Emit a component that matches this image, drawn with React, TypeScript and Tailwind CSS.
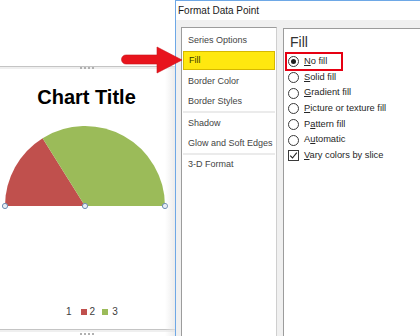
import React from "react";

const font = { fontFamily: '"Liberation Sans", Arial, sans-serif' };

function Radio({ checked }: { checked?: boolean }) {
  return (
    <span className="w-[11px] h-[11px] rounded-full border border-[#3a3a3a] bg-white flex items-center justify-center shrink-0">
      {checked && <span className="w-[5px] h-[5px] rounded-full bg-[#1e1e1e]" />}
    </span>
  );
}

function Row({ children, checked, box }: { children: React.ReactNode; checked?: boolean; box?: boolean }) {
  return (
    <div className="h-[15.7px] flex items-center pl-[4px] gap-[5px] text-[9.3px] text-[#262626]">
      {box ? (
        <span className="w-[11px] h-[11px] border border-[#3a3a3a] bg-white flex items-center justify-center shrink-0">
          <svg width="9" height="9" viewBox="0 0 9 9">
            <path d="M1.2 4.6 L3.5 7 L7.8 1.6" fill="none" stroke="#222" strokeWidth="1.1" />
          </svg>
        </span>
      ) : (
        <Radio checked={checked} />
      )}
      <span>{children}</span>
    </div>
  );
}

function Dots() {
  return (
    <div className="absolute left-[80px] top-[1px] flex gap-[2px]">
      <span className="w-[2px] h-[2px] bg-[#b0b0b0]" />
      <span className="w-[2px] h-[2px] bg-[#b0b0b0]" />
      <span className="w-[2px] h-[2px] bg-[#b0b0b0]" />
      <span className="w-[2px] h-[2px] bg-[#b0b0b0]" />
    </div>
  );
}

export default function App() {
  return (
    <div className="w-[420px] h-[336px] relative overflow-hidden flex bg-white" style={font}>
      {/* Left: chart */}
      <div className="w-[175px] h-full flex flex-col relative shrink-0">
        <div className="h-[66px] bg-white" />
        <div className="h-[1px] bg-[#c4c4c4] relative">
          <Dots />
        </div>
        <div className="h-[2px] bg-[#efefef]" />
        <div className="mt-[16px] h-[24px] leading-[24px] text-[20px] font-bold text-black text-center pr-[2px]">
          Chart Title
        </div>
        <svg width="175" height="103" viewBox="0 0 175 103" className="block">
          <path d="M85 97 L5 97 A80 80 0 0 1 42.6 29.2 Z" fill="#c0504d" />
          <path d="M85 97 L42.6 29.2 A80 80 0 0 1 165 97 Z" fill="#9bbb59" />
          <circle cx="5" cy="97" r="2.6" fill="#e9eef5" stroke="#6f8fb3" strokeWidth="1" />
          <circle cx="85" cy="97" r="2.6" fill="#e9eef5" stroke="#6f8fb3" strokeWidth="1" />
          <circle cx="165" cy="97" r="2.6" fill="#e9eef5" stroke="#6f8fb3" strokeWidth="1" />
        </svg>
        <div className="flex-1" />
        <div className="flex items-center h-[12px] pl-[66px] text-[10px] text-[#404040] leading-none">
          <span>1</span>
          <span className="ml-[9px] w-[6px] h-[6px] bg-[#c0504d]" />
          <span className="ml-[3px]">2</span>
          <span className="ml-[7px] w-[6px] h-[6px] bg-[#9bbb59]" />
          <span className="ml-[4px]">3</span>
        </div>
        <div className="h-[11px]" />
        <div className="h-[1px] bg-[#c4c4c4]" />
        <div className="h-[2px] bg-[#efefef]" />
        <div className="h-[4px] relative">
          <Dots />
        </div>
        <div className="absolute right-0 top-[66px] bottom-0 w-[10px] bg-gradient-to-r from-transparent to-[#e4e4e4] opacity-70" />
      </div>

      {/* Dialog */}
      <div className="flex-1 h-full flex flex-col border-l border-t border-[#6ea8e6]">
        <div className="h-[19px] bg-white flex items-center pl-[2px] text-[10px] text-[#1a1a1a]">
          Format Data Point
        </div>
        <div className="flex-1 bg-[#f0f0f0] flex pl-[5px] pt-[7px]">
          {/* Left list */}
          <div className="w-[96px] bg-white border-l border-t border-[#9c9c9c] border-r border-r-[#cfcfcf] flex flex-col text-[9px] text-[#444]">
            <div className="h-[23px] pt-[2px] flex items-center pl-[6px]">Series Options</div>
            <div className="mx-[1px] h-[19px] flex items-center pl-[5px] bg-[#ffe80f] border border-[#d6b800] text-[#3a3a00]">
              Fill
            </div>
            <div className="mt-[2px] h-[20px] flex items-center pl-[6px]">Border Color</div>
            <div className="h-[19px] flex items-center pl-[6px]">Border Styles</div>
            <div className="mx-[1px] h-[2px] bg-[#ebebeb]" />
            <div className="h-[21px] flex items-center pl-[6px]">Shadow</div>
            <div className="h-[19px] flex items-center pl-[6px]">Glow and Soft Edges</div>
            <div className="mx-[1px] h-[2px] bg-[#ebebeb]" />
            <div className="h-[19px] flex items-center pl-[6px]">3-D Format</div>
          </div>
          {/* Right panel */}
          <div className="flex-1 ml-[6px] mt-[1px] bg-white border-l border-t border-[#9c9c9c] flex flex-col pt-[1px]">
            <div className="h-[24px] leading-[24px] pl-[6px] text-[14px] text-[#333]">Fill</div>
            <Row checked>
              <u>N</u>o fill
            </Row>
            <Row>
              <u>S</u>olid fill
            </Row>
            <Row>
              <u>G</u>radient fill
            </Row>
            <Row>
              <u>P</u>icture or texture fill
            </Row>
            <Row>
              P<u>a</u>ttern fill
            </Row>
            <Row>
              A<u>u</u>tomatic
            </Row>
            <Row box>
              <u>V</u>ary colors by slice
            </Row>
          </div>
        </div>
      </div>

      {/* Annotation: red box */}
      <div className="absolute left-[285px] top-[52px] w-[58px] h-[19px] border-2 border-[#e60012]" />

      {/* Annotation: red arrow */}
      <svg className="absolute left-[118px] top-[45px]" width="66" height="30" viewBox="0 0 66 30">
        <path
          d="M8 10 L39 10 L39 2 L64 15 L39 28 L39 19 L8 19 A4.5 4.5 0 0 1 8 10 Z"
          fill="#e8141d"
          stroke="#c9101a"
          strokeWidth="0.6"
        />
      </svg>
    </div>
  );
}
